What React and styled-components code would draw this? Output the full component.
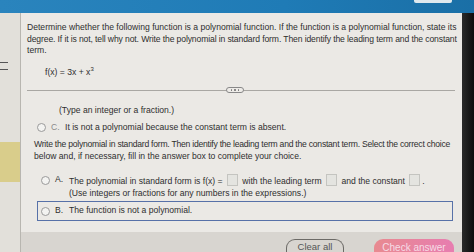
import React from "react";
import styled, { createGlobalStyle } from "styled-components";

const Global = createGlobalStyle`
  html, body { margin: 0; padding: 0; background: #111; }
  body { font-family: "Liberation Sans", Arial, sans-serif; }
`;

const Page = styled.div`
  width: 474px;
  height: 252px;
  overflow: hidden;
  display: flex;
  flex-direction: column;
  background: #e6e4df;
`;

const TopBar = styled.div`
  height: 13px;
  flex: none;
  background: linear-gradient(90deg, #2a84bd, #1f7bb6 60%, #1a6fa6);
  display: flex;
  justify-content: flex-end;
  padding-right: 22px;
`;

const Tab = styled.div`
  width: 38px;
  height: 3px;
  background: #dfe9ee;
  border-radius: 0 0 2px 2px;
`;

const Body = styled.div`
  flex: 1;
  display: flex;
  min-height: 0;
`;

const Rail = styled.div`
  width: 20px;
  flex: none;
  background: #e2e0da;
  border-right: 1px solid #b8b6b0;
  display: flex;
  flex-direction: column;
`;

const RailIcon = styled.div`
  margin: 49px 0 0 0;
  width: 8px;
  height: 6px;
  border-top: 1px solid #555;
  border-bottom: 1px solid #555;
`;

const RailMark = styled.div`
  margin-top: 72px;
  height: 40px;
  background: #d9cd8b;
`;

const Main = styled.div`
  flex: 1;
  min-width: 0;
  display: flex;
  flex-direction: column;
  background: #ebe9e5;
`;

const Content = styled.div`
  flex: 1;
  padding: 9px 1px 0 6px;
  color: #2e2e2e;
  font-size: 8.6px;
  line-height: 11.5px;
  white-space: nowrap;
  overflow: hidden;
`;

const Prompt = styled.p`
  margin: 0;
`;

const Tight = styled.span`
  letter-spacing: ${(p) => p.$ls || -0.1}px;
`;

const Formula = styled.div`
  margin: 10px 0 0 18px;
  font-size: 8.6px;
  sup { font-size: 6px; vertical-align: 4px; line-height: 0; }
`;

const Divider = styled.div`
  position: relative;
  margin: 12px 6px 0 0;
  height: 1px;
  background: #a9a7a3;
`;

const Dots = styled.div`
  position: absolute;
  left: 199px;
  top: -3px;
  width: 18px;
  height: 6px;
  border: 1px solid #888;
  border-radius: 4px;
  background: #eeece8;
  box-sizing: border-box;
  display: flex;
  justify-content: center;
  align-items: center;
  gap: 2px;
  span { width: 1.5px; height: 1.5px; border-radius: 50%; background: #777; }
`;

const Hint = styled.div`
  margin: 14px 0 0 32px;
`;

const Choice = styled.div`
  display: flex;
  align-items: flex-start;
  margin: ${(p) => p.$mt || 0}px 0 0 ${(p) => p.$ml || 0}px;
  padding: ${(p) => (p.$selected ? "3px 3px" : "0")};
  border: ${(p) => (p.$selected ? "1.5px solid #5771a8" : "none")};
  ${(p) => p.$selected && "margin-right: 8px;"}
`;

const Radio = styled.span`
  width: 7px;
  height: 7px;
  border-radius: 50%;
  border: 1px solid #9a9a9a;
  background: #f3f3f1;
  flex: none;
  margin-top: 1.5px;
  margin-right: 5px;
`;

const Letter = styled.span`
  width: 14px;
  flex: none;
  color: ${(p) => (p.$faded ? "#8a8a8a" : "#2e2e2e")};
`;

const Instructions = styled.p`
  margin: 6px 0 0 7px;
`;

const Blank = styled.span`
  display: inline-block;
  width: 9px;
  height: 10px;
  margin: 0 2px;
  vertical-align: -2px;
  border: 1px solid #c4c4c0;
  background: #e4e4e0;
`;

const Footer = styled.div`
  height: 20px;
  flex: none;
  background: #d8d5d0;
  display: flex;
  justify-content: flex-end;
  align-items: flex-end;
  gap: 30px;
  padding-right: 8px;
`;

const ClearButton = styled.div`
  width: 56px;
  height: 12px;
  border: 1px solid #6c6a66;
  border-bottom: none;
  border-radius: 9px 9px 0 0;
  color: #555;
  font-size: 9.5px;
  text-align: center;
  line-height: 14px;
  overflow: hidden;
`;

const CheckButton = styled.div`
  width: 80px;
  height: 13px;
  border-radius: 9px 9px 0 0;
  background: linear-gradient(90deg, #e88a90, #e77db0);
  color: #f6dce6;
  font-size: 10px;
  text-align: center;
  line-height: 17px;
  overflow: hidden;
`;

const Edge = styled.div`
  width: 12px;
  flex: none;
  background: linear-gradient(90deg, #2a2a2a, #0c0c0c);
`;

export default function App() {
  return (
    <Page>
      <Global />
      <TopBar>
        <Tab />
      </TopBar>
      <Body>
        <Rail>
          <RailIcon />
          <RailMark />
        </Rail>
        <Main>
          <Content>
            <Prompt>
              Determine whether the following function is a polynomial function. If the function is a polynomial
              function, state its
              <br />
              <Tight $ls={-0.12}>
                degree. If it is not, tell why not. Write the polynomial in standard form. Then identify the leading
                term and the constant
              </Tight>
              <br />
              term.
            </Prompt>
            <Formula>
              f(x) = 3x + x<sup>3</sup>
            </Formula>
            <Divider>
              <Dots>
                <span />
                <span />
                <span />
              </Dots>
            </Divider>
            <Hint>(Type an integer or a fraction.)</Hint>
            <Choice $mt={5} $ml={10}>
              <Radio />
              <Letter $faded>C.</Letter>
              <span>It is not a polynomial because the constant term is absent.</span>
            </Choice>
            <Instructions>
              <Tight $ls={-0.24}>
                Write the polynomial in standard form. Then identify the leading term and the constant term. Select
                the correct choice
              </Tight>
              <br />
              below and, if necessary, fill in the answer box to complete your choice.
            </Instructions>
            <Choice $mt={12} $ml={14}>
              <Radio />
              <Letter>A.</Letter>
              <span>
                The polynomial in standard form is f(x) = <Blank /> with the leading term <Blank /> and the constant{" "}
                <Blank />.
                <br />
                (Use integers or fractions for any numbers in the expressions.)
              </span>
            </Choice>
            <Choice $mt={2} $ml={10} $selected>
              <Radio />
              <Letter>B.</Letter>
              <span>The function is not a polynomial.</span>
            </Choice>
          </Content>
          <Footer>
            <ClearButton>Clear all</ClearButton>
            <CheckButton>Check answer</CheckButton>
          </Footer>
        </Main>
        <Edge />
      </Body>
    </Page>
  );
}
